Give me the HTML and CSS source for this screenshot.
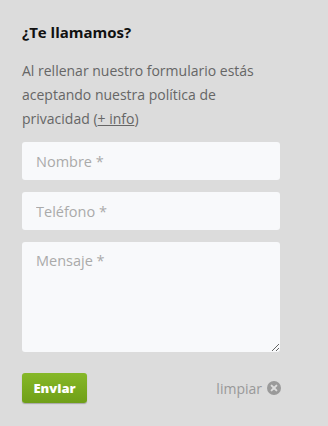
FILE: index.html
```html
<!DOCTYPE html>
<html lang="es">
<head>
<meta charset="utf-8">
<link rel="stylesheet" href="styles.css">
</head>
<body>
<div class="box">
  <h2 class="title">¿Te llamamos?</h2>
  <p class="intro">Al rellenar nuestro formulario estás aceptando nuestra política de privacidad (<a href="#" class="more">+ info</a>)</p>
  <form class="form">
    <input class="field" type="text" placeholder="Nombre *">
    <input class="field" type="text" placeholder="Teléfono *">
    <textarea class="field area" placeholder="Mensaje *"></textarea>
    <div class="actions">
      <button type="button" class="send">Enviar</button>
      <a href="#" class="clear">limpiar <span class="x">
        <svg width="14" height="14" viewBox="0 0 14 14"><circle cx="7" cy="7" r="7" fill="#9a9a9a"/><path d="M4.6 4.6 L9.4 9.4 M9.4 4.6 L4.6 9.4" stroke="#dcdcdc" stroke-width="2" stroke-linecap="round"/></svg>
      </span></a>
    </div>
  </form>
</div>
</body>
</html>
```
FILE: styles.css
```css
html, body {
  margin: 0;
  padding: 0;
  background: #dcdcdc;
}
body {
  font-family: "Open Sans", "Liberation Sans", sans-serif;
  width: 328px;
  height: 426px;
  overflow: hidden;
}
.box {
  padding: 22px 48px 0 22px;
}
.title {
  margin: 0;
  font-size: 15px;
  font-weight: 700;
  color: #111;
  line-height: 20px;
}
.intro {
  margin: 17px 0 11px;
  font-size: 14px;
  line-height: 24px;
  color: #666;
}
.more {
  color: #666;
  text-decoration: underline;
}
.form {
  display: flex;
  flex-direction: column;
  gap: 12px;
}
.field {
  box-sizing: border-box;
  width: 258px;
  height: 38px;
  margin: 0;
  border: none;
  border-radius: 3px;
  background: #f8f9fb;
  padding: 0 14px;
  font-family: "Open Sans", sans-serif;
  font-size: 14.5px;
  color: #555;
  outline: none;
}
.field::placeholder {
  color: #aaa;
}
.area {
  height: 110px;
  padding: 9px 14px;
  resize: vertical;
}
.actions {
  display: flex;
  justify-content: space-between;
  align-items: center;
  margin-top: 9px;
}
.send {
  width: 65px;
  height: 30px;
  border: none;
  border-radius: 3px;
  background: linear-gradient(#86b828, #6f9f18);
  box-shadow: 0 1px 1px rgba(0,0,0,0.25);
  color: #fff;
  font-family: "Open Sans", sans-serif;
  font-weight: 800;
  font-size: 13px;
  padding: 0;
}
.clear {
  display: flex;
  align-items: center;
  gap: 5px;
  color: #999;
  font-size: 14px;
  text-decoration: none;
  margin-right: -1px;
}
.x {
  display: flex;
}
```
